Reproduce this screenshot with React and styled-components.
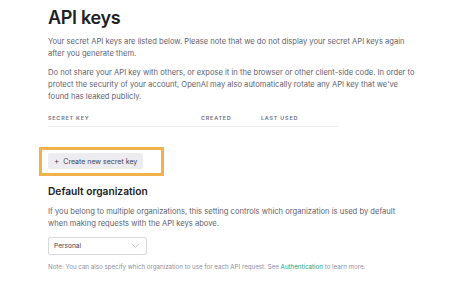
import React from 'react';
import styled, { createGlobalStyle } from 'styled-components';

const GlobalStyle = createGlobalStyle`
  html, body {
    margin: 0;
    padding: 0;
    background: #fff;
  }
  body {
    font-family: Inter, "Noto Sans", sans-serif;
    color: #353740;
  }
`;

const Page = styled.main`
  width: 474px;
  height: 294px;
  box-sizing: border-box;
  padding: 8px 0 0 48px;
  overflow: hidden;
`;

const Title = styled.h1`
  margin: 0 0 8px;
  font-size: 18px;
  line-height: 20px;
  font-weight: 600;
  color: #202123;
  letter-spacing: -0.3px;
`;

const Text = styled.p`
  margin: 0 0 7px;
  width: ${({ $width }) => $width || 372}px;
  font-size: ${({ $size }) => $size || 7.6}px;
  line-height: 12px;
  color: #5f5f70;
`;

const Table = styled.div`
  width: 290px;
  margin-top: 12px;
  display: grid;
  grid-template-columns: 153px 60px 1fr;
  padding-bottom: 5px;
  border-bottom: 1px solid #ececf1;
`;

const HeadCell = styled.div`
  font-size: 5.4px;
  font-weight: 600;
  letter-spacing: 0.8px;
  text-transform: uppercase;
  color: #6e6e80;
`;

const Highlight = styled.div`
  display: inline-flex;
  margin: 20px 0 0 -9px;
  padding: 3px 18px 4px 6px;
  border: 3px solid #f1b24d;
`;

const Button = styled.button`
  display: flex;
  align-items: center;
  gap: 4px;
  height: 16px;
  padding: 0 6px 0 6px;
  border: none;
  border-radius: 2px;
  background: #ececf1;
  color: #40414f;
  font-family: inherit;
  font-size: 7px;
`;

const Plus = styled.span`
  font-size: 8px;
  line-height: 1;
`;

const SubTitle = styled.h2`
  margin: 8px 0 8px;
  font-size: 10.2px;
  line-height: 14px;
  font-weight: 600;
  color: #202123;
`;

const Select = styled.div`
  width: 99px;
  height: 18px;
  box-sizing: border-box;
  margin-top: 3px;
  display: flex;
  align-items: center;
  justify-content: space-between;
  padding: 0 7px 0 5px;
  border: 1px solid #d9d9e3;
  border-radius: 2px;
  font-size: 6.6px;
  color: #40414f;
`;

const Note = styled.p`
  margin: 8px 0 0;
  font-size: 6.2px;
  color: #8e8ea0;
`;

const Link = styled.a`
  color: #10a37f;
  text-decoration: none;
`;

export default function App() {
  return (
    <>
      <GlobalStyle />
      <Page>
        <Title>API keys</Title>
        <Text>
          Your secret API keys are listed below. Please note that we do not display your secret API keys again
          after you generate them.
        </Text>
        <Text>
          Do not share your API key with others, or expose it in the browser or other client-side code. In order to
          protect the security of your account, OpenAI may also automatically rotate any API key that we've found has
          leaked publicly.
        </Text>
        <Table>
          <HeadCell>Secret key</HeadCell>
          <HeadCell>Created</HeadCell>
          <HeadCell>Last used</HeadCell>
        </Table>
        <Highlight>
          <Button>
            <Plus>+</Plus>
            Create new secret key
          </Button>
        </Highlight>
        <SubTitle>Default organization</SubTitle>
        <Text $width={362}>
          If you belong to multiple organizations, this setting controls which organization is used by default when
          making requests with the API keys above.
        </Text>
        <Select>
          Personal
          <svg width="7" height="4" viewBox="0 0 7 4" fill="none" stroke="#acacbe" strokeWidth="0.8">
            <path d="M0.5 0.5 L3.5 3.3 L6.5 0.5" />
          </svg>
        </Select>
        <Note>
          Note: You can also specify which organization to use for each API request. See{' '}
          <Link href="#">Authentication</Link> to learn more.
        </Note>
      </Page>
    </>
  );
}
